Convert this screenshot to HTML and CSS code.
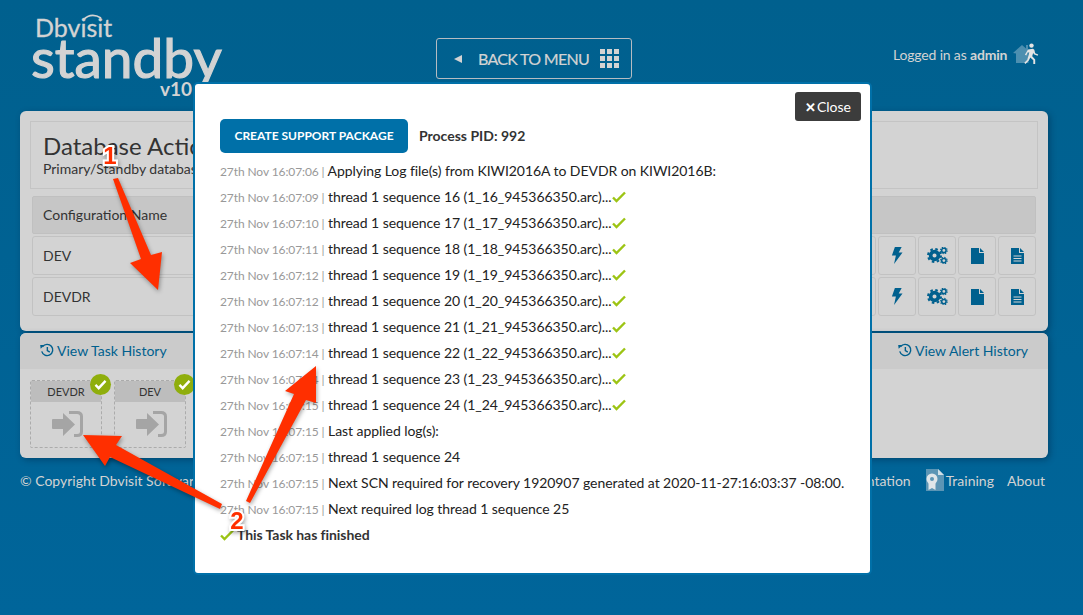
FILE: index.html
```html
<!DOCTYPE html>
<html lang="en">
<head>
<meta charset="utf-8">
<title>Dbvisit Standby</title>
<link rel="stylesheet" href="styles.css">
</head>
<body>
<svg width="0" height="0" class="defs">
  <defs>
    <symbol id="i-bolt" viewBox="0 0 14 20"><path d="M4.500 0h8L9 6.500h4.500L3.500 20l2.200-10H1z"/></symbol>
    <symbol id="i-cogs" viewBox="0 0 24 20">
      <circle cx="8.500" cy="10" r="4.600" fill="none" stroke="currentColor" stroke-width="4.400"/>
      <circle cx="8.500" cy="10" r="7.600" fill="none" stroke="currentColor" stroke-width="2.400" stroke-dasharray="3 2.970"/>
      <circle cx="19.500" cy="4" r="2.600" fill="none" stroke="currentColor" stroke-width="1.800"/>
      <circle cx="19.500" cy="4" r="3.900" fill="none" stroke="currentColor" stroke-width="1.200" stroke-dasharray="1.600 1.460"/>
      <circle cx="19.500" cy="16" r="2.600" fill="none" stroke="currentColor" stroke-width="1.800"/>
      <circle cx="19.500" cy="16" r="3.900" fill="none" stroke="currentColor" stroke-width="1.200" stroke-dasharray="1.600 1.460"/>
    </symbol>
    <symbol id="i-file" viewBox="0 0 13 16"><path d="M0 0h8v5h5v11H0z"/><path d="M9 0l4 4H9z"/></symbol>
    <symbol id="i-filetext" viewBox="0 0 13 16"><path fill-rule="evenodd" d="M0 0h8v5h5v11H0zM2.500 7.500v1h8v-1zM2.500 10v1h8v-1zM2.500 12.500v1h8v-1z"/><path d="M9 0l4 4H9z"/></symbol>
    <symbol id="i-history" viewBox="0 0 16 16">
      <path d="M3 4.200A6.400 6.400 0 1 1 2 9.600" fill="none" stroke="currentColor" stroke-width="1.600"/>
      <path d="M0.200 2.200l5 .2-4.400 4.200z"/>
      <path d="M8.400 4.600v4l2.800 1.800" fill="none" stroke="currentColor" stroke-width="1.600"/>
    </symbol>
    <symbol id="i-signin" viewBox="0 0 31 26">
      <path d="M1 8h10V2l12 11.500L11 25v-7H1q-1 0-1-1V9q0-1 1-1z"/>
      <path d="M17 1.500h8q4.500 0 4.500 4v15q0 4-4.500 4h-3" fill="none" stroke="currentColor" stroke-width="3"/>
    </symbol>
  </defs>
</svg>

<div class="page">
  <header class="top">
    <div class="logo">
      <div class="logo-brand">Dbvisit<svg class="logo-arc" viewBox="0 0 20 8"><path d="M1 7Q9-1 19 5" fill="none" stroke="currentColor" stroke-width="1.600"/></svg></div>
      <div class="logo-name">standby</div>
      <div class="logo-ver">v10</div>
    </div>
    <a class="back">
      <span class="back-tri"></span>
      <span class="back-label">BACK TO MENU</span>
      <span class="back-grid"><i></i><i></i><i></i><i></i><i></i><i></i><i></i><i></i><i></i></span>
    </a>
    <div class="login">
      <span>Logged in as <b>admin</b></span>
      <svg class="login-icon" viewBox="0 0 26 22">
        <path class="house" d="M0 10L9 2l4 3.500V2h2v6l3 2.500h-2.500V20H3V10.500z"/>
        <circle class="walker" cx="18.500" cy="2.600" r="2.200"/>
        <path class="walker" d="M15 6.500l5-.8 1.300 1 .9 3.500 3 1.300-.6 1.300-3.800-1.500-.6-1.500-1 3.500 3 3.200v4.500h-1.900v-3.800l-3-2.600-1.500 3-3.300 3.300-1.200-1.200 3-3 2-7.500-1.700.4-1.300 2.800-1.400-.6z"/>
      </svg>
    </div>
  </header>

  <main class="content">
    <section class="panel panel-db">
      <div class="title-box">
        <h1>Database Actions</h1>
        <p>Primary/Standby database configurations</p>
      </div>
      <div class="tbl-head">Configuration Name</div>
      <div class="tbl-row">
        <div class="cell cell-name">DEV</div>
        <div class="cell cell-a"></div>
        <div class="cell cell-a"><svg class="ic ic-bolt"><use href="#i-bolt"/></svg></div>
        <div class="cell cell-a"><svg class="ic ic-cogs"><use href="#i-cogs"/></svg></div>
        <div class="cell cell-a"><svg class="ic ic-file"><use href="#i-file"/></svg></div>
        <div class="cell cell-a"><svg class="ic ic-file"><use href="#i-filetext"/></svg></div>
      </div>
      <div class="tbl-row">
        <div class="cell cell-name">DEVDR</div>
        <div class="cell cell-a"></div>
        <div class="cell cell-a"><svg class="ic ic-bolt"><use href="#i-bolt"/></svg></div>
        <div class="cell cell-a"><svg class="ic ic-cogs"><use href="#i-cogs"/></svg></div>
        <div class="cell cell-a"><svg class="ic ic-file"><use href="#i-file"/></svg></div>
        <div class="cell cell-a"><svg class="ic ic-file"><use href="#i-filetext"/></svg></div>
      </div>
    </section>

    <section class="panel panel-hist">
      <div class="hist-head">
        <a class="hist-link"><svg class="ic-hist"><use href="#i-history"/></svg>View Task History</a>
        <a class="hist-link"><svg class="ic-hist"><use href="#i-history"/></svg>View Alert History</a>
      </div>
      <div class="tiles">
        <div class="tile">
          <div class="tile-head">DEVDR</div>
          <svg class="tile-icon"><use href="#i-signin"/></svg>
          <span class="tile-ok"><svg viewBox="0 0 14 12"><path d="M1.500 6.500l3.500 3.500 7.500-8" fill="none" stroke="#fff" stroke-width="2.600"/></svg></span>
        </div>
        <div class="tile">
          <div class="tile-head">DEV</div>
          <svg class="tile-icon"><use href="#i-signin"/></svg>
          <span class="tile-ok"><svg viewBox="0 0 14 12"><path d="M1.500 6.500l3.500 3.500 7.500-8" fill="none" stroke="#fff" stroke-width="2.600"/></svg></span>
        </div>
      </div>
    </section>

    <footer class="foot">
      <span>© Copyright Dbvisit Software Limited</span>
      <nav class="foot-nav">
        <a>Documentation</a>
        <a class="foot-train"><svg class="train-icon" viewBox="0 0 20 22"><path class="train-doc" d="M2 0h12l6 6v16H2z"/><path class="train-fold" d="M14 0l6 6h-6z"/><circle class="train-rib" cx="8" cy="10" r="5.500"/><circle class="train-hole" cx="8" cy="10" r="2"/><path class="train-rib" d="M4.500 14h7v7l-3.500-2-3.500 2z"/></svg>Training</a>
        <a>About</a>
      </nav>
    </footer>
  </main>
</div>

<div class="modal">
  <button class="close"><span class="close-x">✕</span>Close</button>
  <div class="modal-top">
    <button class="support">CREATE SUPPORT PACKAGE</button>
    <strong class="pid">Process PID: 992</strong>
  </div>
  <ul class="log">
    <li><time>27th Nov 16:07:06 |</time> Applying Log file(s) from KIWI2016A to DEVDR on KIWI2016B:</li>
    <li><time>27th Nov 16:07:09 |</time> thread 1 sequence 16 (1_16_945366350.arc)...<svg class="tick" viewBox="0 0 14 12"><path d="M1 6.500l3.500 3.500L13 1.500"/></svg></li>
    <li><time>27th Nov 16:07:10 |</time> thread 1 sequence 17 (1_17_945366350.arc)...<svg class="tick" viewBox="0 0 14 12"><path d="M1 6.500l3.500 3.500L13 1.500"/></svg></li>
    <li><time>27th Nov 16:07:11 |</time> thread 1 sequence 18 (1_18_945366350.arc)...<svg class="tick" viewBox="0 0 14 12"><path d="M1 6.500l3.500 3.500L13 1.500"/></svg></li>
    <li><time>27th Nov 16:07:12 |</time> thread 1 sequence 19 (1_19_945366350.arc)...<svg class="tick" viewBox="0 0 14 12"><path d="M1 6.500l3.500 3.500L13 1.500"/></svg></li>
    <li><time>27th Nov 16:07:12 |</time> thread 1 sequence 20 (1_20_945366350.arc)...<svg class="tick" viewBox="0 0 14 12"><path d="M1 6.500l3.500 3.500L13 1.500"/></svg></li>
    <li><time>27th Nov 16:07:13 |</time> thread 1 sequence 21 (1_21_945366350.arc)...<svg class="tick" viewBox="0 0 14 12"><path d="M1 6.500l3.500 3.500L13 1.500"/></svg></li>
    <li><time>27th Nov 16:07:14 |</time> thread 1 sequence 22 (1_22_945366350.arc)...<svg class="tick" viewBox="0 0 14 12"><path d="M1 6.500l3.500 3.500L13 1.500"/></svg></li>
    <li><time>27th Nov 16:07:14 |</time> thread 1 sequence 23 (1_23_945366350.arc)...<svg class="tick" viewBox="0 0 14 12"><path d="M1 6.500l3.500 3.500L13 1.500"/></svg></li>
    <li><time>27th Nov 16:07:15 |</time> thread 1 sequence 24 (1_24_945366350.arc)...<svg class="tick" viewBox="0 0 14 12"><path d="M1 6.500l3.500 3.500L13 1.500"/></svg></li>
    <li><time>27th Nov 16:07:15 |</time> Last applied log(s):</li>
    <li><time>27th Nov 16:07:15 |</time> thread 1 sequence 24</li>
    <li><time>27th Nov 16:07:15 |</time> Next SCN required for recovery 1920907 generated at 2020-11-27:16:03:37 -08:00.</li>
    <li><time>27th Nov 16:07:15 |</time> Next required log thread 1 sequence 25</li>
    <li class="done"><svg class="tick tick-done" viewBox="0 0 14 12"><path d="M1 6.500l3.500 3.500L13 1.500"/></svg>This Task has finished</li>
  </ul>
</div>

<svg class="notes" viewBox="0 0 1083 615">
  <polygon points="113,179 118,178 151,255 162,252 158,290 130,263 141,259"/>
  <polygon points="246,501 294,394 285,391 316,366 316,403 306,400 250,503"/>
  <polygon points="222,504 116,445 122,436 83,435 105,466 110,457 220,509"/>
  <text x="110" y="164">1</text>
  <text x="237" y="529">2</text>
</svg>
</body>
</html>
```
FILE: styles.css
```css
* { box-sizing: border-box; }
html, body { margin: 0; padding: 0; }
body {
  width: 1083px;
  height: 615px;
  overflow: hidden;
  position: relative;
  background: linear-gradient(#00608e, #00659a);
  font-family: Lato, "Liberation Sans", sans-serif;
  font-size: 14px;
  color: #333;
}
.defs { position: absolute; }
a { color: inherit; text-decoration: none; }

/* header */
.top {
  height: 111px;
  display: flex;
  position: relative;
  padding-left: 31px;
}
.logo { width: 191px; color: #d3d3d3; padding-top: 14px; position: relative; }
.logo-brand { font-size: 25px; line-height: 26px; padding-left: 4px; position: relative; -webkit-text-stroke: .3px #d3d3d3; }
.logo-arc { position: absolute; left: 50px; top: -1px; width: 22px; height: 8px; }
.logo-name { font-size: 55px; font-weight: 400; line-height: 44px; -webkit-text-stroke: 1.2px #d3d3d3; margin-top: -5px; white-space: nowrap; }
.logo-ver { font-size: 19px; font-weight: 700; line-height: 20px; text-align: right; padding-right: 30px; margin-top: 0; }

.back {
  margin: 38px 0 0 214px;
  width: 196px;
  height: 41px;
  border: 1px solid #b5bcc2;
  border-radius: 3px;
  display: flex;
  align-items: center;
  padding-left: 17px;
  color: #d3d3d3;
}
.back-tri {
  width: 0; height: 0;
  border-style: solid;
  border-width: 4px 8px 4px 0;
  border-color: transparent #d3d3d3 transparent transparent;
}
.back-label { margin-left: 16px; margin-bottom: 1px; font-size: 16px; letter-spacing: -0.7px; -webkit-text-stroke: .2px #d3d3d3; white-space: nowrap; }
.back-grid {
  margin-left: 11px;
  display: grid;
  grid-template-columns: repeat(3, 5px);
  grid-auto-rows: 5px;
  gap: 2px;
}
.back-grid i { background: #d3d3d3; }

.login {
  margin: 43px 0 0 261px;
  height: 22px;
  display: flex;
  align-items: center;
  gap: 6px;
  color: #d3d3d3;
  font-size: 14px;
  letter-spacing: -0.17px;
  white-space: nowrap;
}
.login-icon { width: 26px; height: 22px; }
.house { fill: #4d8fb0; }
.walker { fill: #e4e4e4; }

/* panels */
.content { margin: 0 35px 0 20px; }
.panel {
  background: #d3d3d3;
  border-radius: 6px;
  box-shadow: 2px 2px 6px rgba(0, 40, 70, .45);
  overflow: hidden;
}
.panel-db { height: 220px; padding: 10px 10px 0; }
.title-box {
  height: 68px;
  border: 1px solid #c4c4c4;
  padding: 11px 12px 0;
}
.title-box h1 { margin: 0; font-size: 24px; font-weight: 400; line-height: 26px; color: #333; }
.title-box p { margin: 1px 0 0; font-size: 14px; line-height: 18px; color: #333; }
.tbl-head {
  height: 38px;
  margin: 7px 2px 2px;
  background: #c6c6c6;
  border: 1px solid #c0c0c0;
  border-radius: 2px;
  padding: 0 0 2px 10px;
  display: flex;
  align-items: center;
}
.tbl-row { display: flex; gap: 2px; margin: 0 2px 2px; height: 39px; }
.cell {
  border: 1px solid #c2c2c2;
  border-radius: 3px;
  display: flex;
  align-items: center;
}
.cell-name { flex: 1; padding-left: 10px; font-size: 14px; }
.cell-a { width: 38px; justify-content: center; color: #00608e; fill: #00608e; }
.ic { fill: currentColor; }
.ic-bolt { width: 12px; height: 17px; }
.ic-cogs { width: 21px; height: 17px; }
.ic-file { width: 13px; height: 16px; }

.panel-hist { height: 125px; margin-top: 2px; }
.hist-head {
  height: 36px;
  background: #cbcbcb;
  display: flex;
  justify-content: space-between;
  align-items: center;
  padding: 0 20px 2px;
}
.hist-link { color: #00608e; display: flex; align-items: center; gap: 3px; }
.ic-hist { width: 14px; height: 14px; fill: currentColor; }
.tiles { display: flex; gap: 12px; padding: 11px 0 0 10px; }
.tile {
  width: 72px;
  height: 68px;
  border: 1px dashed #ababab;
  border-radius: 2px;
  position: relative;
  color: #a5a5a5;
  text-align: center;
}
.tile-head {
  height: 21px;
  background: #bdbdbd;
  font-size: 11px;
  line-height: 22px;
  color: #333;
}
.tile-icon { display: block; width: 31px; height: 26px; margin: 9px 0 0 21px; fill: currentColor; }
.tile-ok {
  position: absolute;
  top: -7px;
  right: -10px;
  width: 21px;
  height: 21px;
  border-radius: 50%;
  background: #8fae0c;
  display: flex;
  align-items: center;
  justify-content: center;
}
.tile-ok svg { width: 13px; height: 11px; }

.foot {
  display: flex;
  justify-content: space-between;
  align-items: center;
  margin-top: 11px;
  height: 22px;
  color: #d3d3d3;
}
.foot-nav { display: flex; gap: 13px; align-items: center; margin-right: 3px; }
.foot-train { display: flex; align-items: center; gap: 2px; }
.train-icon { width: 20px; height: 22px; }
.train-doc { fill: #5b95b5; }
.train-fold { fill: #cfe0e8; }
.train-rib { fill: #dfe6ea; }
.train-hole { fill: #5b95b5; }

/* dialog */
.modal {
  position: absolute;
  left: 193px;
  top: 82px;
  width: 679px;
  height: 493px;
  background: #fff;
  border: 2px solid #0070a8;
  border-radius: 5px;
  padding: 35px 25px 0;
}
.close {
  position: absolute;
  right: 9px;
  top: 8px;
  width: 66px;
  height: 29px;
  border: 0;
  border-radius: 3px;
  background: #3c3c3c;
  color: #fff;
  font: 14px Lato, sans-serif;
  padding: 0;
}
.close-x { font-size: 13px; font-weight: 700; margin-right: 1px; }
.modal-top { display: flex; align-items: center; gap: 11px; height: 34px; }
.support {
  width: 188px;
  height: 34px;
  border: 0;
  border-radius: 5px;
  background: #0070a8;
  color: #fff;
  font: 700 12px Lato, sans-serif;
  padding: 0 0 1px;
}
.pid { font-size: 14px; color: #333; margin-bottom: 1px; }
.log { list-style: none; margin: 5px 0 0; padding: 0; }
.log li { height: 26px; line-height: 26px; font-size: 14px; letter-spacing: -0.06px; color: #222; white-space: nowrap; }
.log time { font-size: 12px; letter-spacing: -0.1px; color: #999; }
.tick {
  width: 14px;
  height: 12px;
  margin-left: 1px;
  vertical-align: -1px;
  fill: none;
  stroke: #9cc414;
  stroke-width: 2.400;
}
.log .done { font-weight: 700; color: #333; display: flex; align-items: center; gap: 3px; }
.tick-done { margin-left: 0; }

/* red annotations drawn over the capture */
.notes {
  position: absolute;
  left: 0;
  top: 0;
  width: 1083px;
  height: 615px;
  pointer-events: none;
  filter: drop-shadow(1px 2px 2px rgba(0, 0, 0, .35));
}
.notes polygon { fill: #ff2f00; }
.notes text {
  font: 700 24px "Liberation Sans", sans-serif;
  fill: #ff2f00;
  stroke: #fff;
  stroke-width: 4px;
  paint-order: stroke;
  text-anchor: middle;
}
```
